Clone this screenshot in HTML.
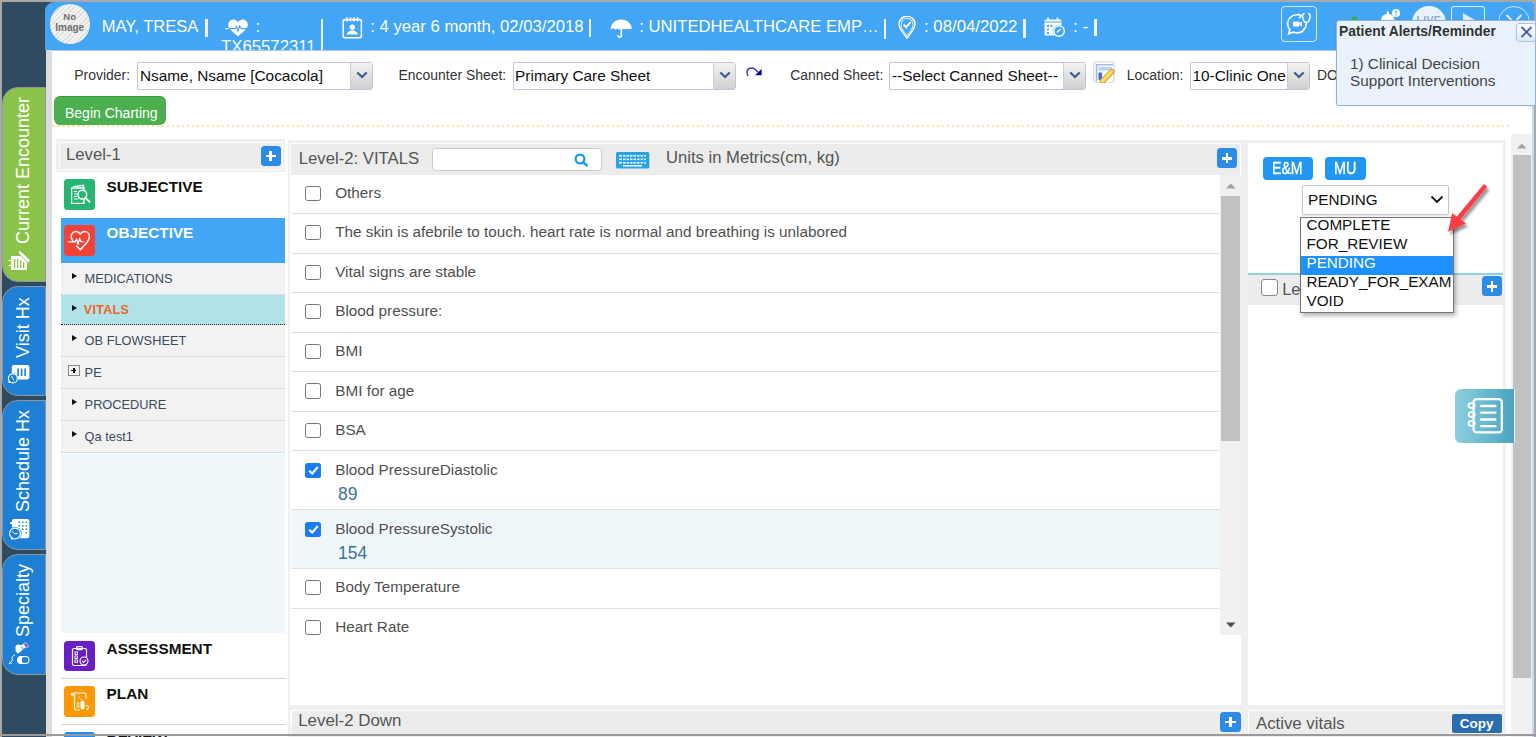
<!DOCTYPE html>
<html><head><meta charset="utf-8">
<style>
*{box-sizing:border-box;margin:0;padding:0}
html,body{width:1536px;height:737px;overflow:hidden;background:#fff;font-family:"Liberation Sans",sans-serif;position:relative}
.a{position:absolute}
.t{position:absolute;white-space:nowrap;line-height:1}
/* frame */
#ftop{left:0;top:0;width:1536px;height:2px;background:#a8a8a8}
#fleft{left:0;top:0;width:2px;height:737px;background:#a8a8a8}
#fright{left:1534px;top:0;width:2px;height:737px;background:#a8a8a8}
#fbot{left:0;top:734.4px;width:1536px;height:1.5px;background:#9a9a9a}
#nav{left:2px;top:2px;width:44px;height:735px;background:#304a60}
#strip{left:46px;top:50px;width:6px;height:687px;background:#dcdcdc}
.tab{position:absolute;left:2px;width:44px;border-radius:16px 0 0 16px;color:#fff;border:1px solid #8d98a3}
.tab .lbl{position:absolute;font-size:18px;line-height:1;white-space:nowrap;transform-origin:0 0;transform:rotate(-90deg)}
#header{left:45px;top:2px;width:1489px;height:48px;background:#42a5f5;border-radius:9px 2px 0 0}
.ht{position:absolute;color:#fff;font-size:17.3px;line-height:1;white-space:nowrap}
.lab{position:absolute;font-size:13.95px;color:#333;line-height:1;white-space:nowrap}
.sel{position:absolute;height:28px;border:1.5px solid #c3c7d8;background:#fff;border-radius:0 3px 3px 0}
.sel .v{position:absolute;left:1.5px;top:4.6px;font-size:15.4px;color:#111;line-height:1;white-space:nowrap}
.sel .btn{position:absolute;right:0;top:0;width:22px;height:100%;background:linear-gradient(#f2f2f2,#d0d0d0);border-left:1px solid #c9ccd9}
.sel .btn svg{position:absolute;left:5px;top:8px}

.l1h{position:absolute;left:56px;top:139px;width:229px;height:33px;background:#efefef}
.l1h .in{position:absolute;left:2.5px;top:2.8px;right:2.5px;bottom:2.5px;border:1px solid #fff;background:#ececec}
.plus{position:absolute;width:20.4px;height:20.4px;background:#2b8be6;border-radius:3.5px}
.plus:before{content:"";position:absolute;left:5px;top:9px;width:10.4px;height:2.5px;background:#fff}
.plus:after{content:"";position:absolute;left:8.95px;top:5px;width:2.5px;height:10.4px;background:#fff}
.ico{position:absolute;left:64.2px;width:30.8px;height:30.6px;border-radius:3.5px}
.l1t{position:absolute;left:106.6px;font-size:15.3px;font-weight:bold;color:#111;white-space:nowrap;line-height:1}
.sub{position:absolute;left:61px;width:224px;background:#f2f2f2;border-bottom:1px dotted #b9cde8}
.sub .tri{position:absolute;left:72px;width:0;height:0;border-left:5px solid #111;border-top:3.8px solid transparent;border-bottom:3.8px solid transparent}
.sub .st{position:absolute;left:23.6px;font-size:12.8px;color:#3b4a5c;white-space:nowrap;line-height:1}

.row{position:absolute;left:291px;width:929px;border-bottom:1.3px solid #e2e2e2;background:#fff}
.cb{position:absolute;left:14.4px;width:15.4px;height:15.3px;border:1.6px solid #767676;border-radius:2.5px;background:#fff}
.cbc{position:absolute;left:14.4px;width:15.4px;height:15.3px;border-radius:2.5px;background:#1a7cf5}
.rt{position:absolute;left:44.2px;font-size:15.3px;color:#505050;white-space:nowrap;line-height:1}
.rv{position:absolute;left:47px;font-size:17.5px;color:#3d7394;white-space:nowrap;line-height:1}
</style></head><body>
<div class="a" id="nav"></div>
<div class="a" style="left:2px;top:2px;width:60px;height:20px;background:#304a60"></div>
<div class="a" id="strip"></div>
<div class="a" id="ftop"></div>
<div class="a" id="fleft"></div>
<div class="a" id="fright"></div>

<!-- tabs -->
<div class="tab" style="top:87px;height:195px;background:#8bc34a"><div class="lbl" style="left:10.9px;top:156px">Current Encounter</div></div>
<div class="tab" style="top:286px;height:110px;background:#1e80d4"><div class="lbl" style="left:10.9px;top:71.0px">Visit Hx</div></div>
<div class="tab" style="top:400px;height:150px;background:#1e80d4"><div class="lbl" style="left:10.9px;top:111.0px">Schedule Hx</div></div>
<div class="tab" style="top:554px;height:121px;background:#1e80d4"><div class="lbl" style="left:10.9px;top:81.5px">Specialty</div></div>


<svg class="a" style="left:0;top:0" width="46" height="737" viewBox="0 0 46 737">
<!-- current encounter -->
<path d="M11 256 H20.5 L27 262.5 V270 H11z" fill="#fff"/>
<g fill="#8bc34a"><rect x="14" y="259" width="1.3" height="9"/><rect x="17" y="259" width="1.3" height="9"/><rect x="20" y="260" width="1.3" height="8"/><rect x="23" y="262" width="1.3" height="6"/></g>
<path d="M8.5 260.5 H12 M8.5 265.5 H12" stroke="#fff" stroke-width="1.1"/>
<path d="M22 254.6 L28.2 260.8" stroke="#fff" stroke-width="3" stroke-linecap="round"/>
<path d="M19.8 252.4 L20.6 253.2" stroke="#fff" stroke-width="2.2" stroke-linecap="round"/>
<!-- visit hx -->
<rect x="11.8" y="365" width="17.6" height="14.5" rx="2.2" fill="#fff"/>
<g fill="#1e80d4"><rect x="17.3" y="368.5" width="1.6" height="7.5"/><rect x="20.8" y="368.5" width="1.6" height="7.5"/><rect x="24.3" y="368.5" width="1.6" height="7.5"/></g>
<circle cx="12.9" cy="378.4" r="5.3" fill="#1e80d4"/>
<circle cx="12.9" cy="378.4" r="4.5" fill="none" stroke="#fff" stroke-width="1.2"/>
<path d="M11.6 376 L12.9 378.4 L13.6 380.4" fill="none" stroke="#fff" stroke-width="0.9"/>
<rect x="8.5" y="381" width="2" height="2" fill="#fff"/>
<!-- schedule hx -->
<rect x="12" y="519" width="17.4" height="19.3" rx="2" fill="#fff"/>
<rect x="10" y="522" width="4" height="2" rx="1" fill="#fff"/>
<g fill="#1e80d4"><circle cx="19.3" cy="522.3" r="0.85"/><circle cx="22.8" cy="522.3" r="0.85"/><circle cx="26.3" cy="522.3" r="0.85"/><circle cx="19.3" cy="525.8" r="0.85"/><circle cx="22.8" cy="525.8" r="0.85"/><circle cx="26.3" cy="525.8" r="0.85"/><circle cx="22.8" cy="529.2" r="0.85"/><circle cx="26.3" cy="529.2" r="0.85"/><circle cx="26.3" cy="532.6" r="0.85"/></g>
<circle cx="15" cy="533.5" r="6.6" fill="#1e80d4"/>
<circle cx="15" cy="533.5" r="5.4" fill="none" stroke="#fff" stroke-width="1.2"/>
<path d="M12.2 531.3 L14.6 533.8 L17.6 533.4" fill="none" stroke="#fff" stroke-width="1"/>
<rect x="11" y="537.5" width="2" height="2" fill="#fff"/>
<!-- specialty -->
<rect x="17" y="656" width="12.5" height="8" rx="4" fill="#fff"/>
<rect x="22" y="657.2" width="6.3" height="5.6" rx="1.5" fill="#1e80d4"/>
<circle cx="18.6" cy="647.8" r="3.2" fill="#fff"/>
<path d="M16.5 652 L24.5 645.5" stroke="#fff" stroke-width="4.2"/>
<path d="M21.2 646.8 L24 649.6" stroke="#1e80d4" stroke-width="1"/>
<ellipse cx="26.2" cy="645.1" rx="2.9" ry="1.4" transform="rotate(45 26.2 645.1)" fill="#5b4bd0" stroke="#fff" stroke-width="0.6"/>
<path d="M15 655 C12 656 11.5 658 12.5 660 L9 664 M10.5 662.5 L11.5 664" fill="none" stroke="#fff" stroke-width="1"/>
</svg>

<!-- header -->
<div class="a" id="header"></div>
<div class="a" style="left:52px;top:50px;width:1482px;height:1px;background:#a9c9ef"></div>

<!-- avatar -->
<div class="a" style="left:49.7px;top:3.6px;width:40px;height:40px;border-radius:50%;background:repeating-linear-gradient(135deg,#f3f3f3 0 2.3px,#dedede 2.3px 3.3px);overflow:hidden">
<div class="t" style="left:0;width:40px;text-align:center;top:8.6px;font-size:9.5px;font-weight:bold;color:#6f6f6f">No</div>
<div class="t" style="left:0;width:40px;text-align:center;top:19.6px;font-size:10px;font-weight:bold;color:#6f6f6f">Image</div>
</div>
<div class="ht" style="left:101.8px;top:18.8px;font-size:16.55px">MAY, TRESA</div>
<div class="a" style="left:205.3px;top:19px;width:2.3px;height:17.5px;background:#f6f0ea"></div>
<svg class="a" style="left:225px;top:18.6px" width="23" height="18" viewBox="0 0 23 18"><path d="M13 17.4 C9 14 3.2 10 3.2 5.6 C3.2 2.6 5.5 0.4 8.2 0.4 C10.2 0.4 12 1.6 13 3.3 C14 1.6 15.8 0.4 17.8 0.4 C20.5 0.4 22.8 2.6 22.8 5.6 C22.8 10 17 14 13 17.4 Z" fill="#fff"/><path d="M3 9.6 H10.2 L11.6 7.2 L13 12.4 L14.6 6.6 L15.9 9.6 H23" fill="none" stroke="#42a5f5" stroke-width="1.1" stroke-linejoin="round"/><path d="M0.3 9.6 H3.6" stroke="#fff" stroke-width="1.2"/></svg>
<div class="ht" style="left:255.5px;top:18.3px">:</div>
<div class="ht" style="left:221px;top:38.9px;font-size:16.75px;height:11.3px;overflow:hidden;line-height:1">TX65572311</div>
<div class="a" style="left:320.9px;top:19px;width:2.3px;height:31px;background:#f6f0ea"></div>
<svg class="a" style="left:342px;top:15.5px" width="21" height="23" viewBox="0 0 21 23"><rect x="1.2" y="3.6" width="18.2" height="18.2" rx="2" fill="none" stroke="#fff" stroke-width="1.6"/><path d="M5 1.2v4.2M8.5 1.2v4.2M12 1.2v4.2M15.5 1.2v4.2" stroke="#fff" stroke-width="1.4" fill="none"/><circle cx="10.3" cy="11.3" r="2.7" fill="#fff"/><path d="M4.6 18.4c0.6-2.8 3-4 5.7-4s5.1 1.2 5.7 4z" fill="#fff"/></svg>
<div class="ht" style="left:370.2px;top:18.8px;font-size:16.7px">: 4 year 6 month, 02/03/2018</div>
<div class="a" style="left:588.8px;top:19px;width:2.3px;height:17.5px;background:#f6f0ea"></div>
<svg class="a" style="left:610px;top:18.5px" width="23" height="20" viewBox="0 0 23 20"><path d="M0.6 10.5 C0.8 4.5 5.5 0.5 11.3 0.5 C17.1 0.5 21.8 4.5 22 10.5 C21 9.3 19.8 9.3 18.9 10.6 C18 9.3 16.5 9.3 15.6 10.6 C14.6 9.3 13 9.3 12 10.6 L12 10.8 C11.2 9.6 9.6 9.6 8.6 10.8 C7.6 9.4 6.2 9.4 5.2 10.7 C4.2 9.3 2.2 9.1 0.6 10.5Z" fill="#fff"/><path d="M11.3 10v6.8c0 1.9-3.2 1.9-3.2 0" fill="none" stroke="#fff" stroke-width="1.7" stroke-linecap="round"/></svg>
<div class="ht" style="left:639.3px;top:18.7px;font-size:16.66px">: UNITEDHEALTHCARE EMP…</div>
<div class="a" style="left:884.2px;top:19px;width:2.3px;height:19.5px;background:#f6f0ea"></div>
<svg class="a" style="left:897.5px;top:16px" width="18" height="23" viewBox="0 0 18 23"><path d="M9 22 C5 17 1 12.5 1 8.3 A8 8 0 0 1 17 8.3 C17 12.5 13 17 9 22Z" fill="none" stroke="#fff" stroke-width="1.5"/><path d="M9 19.5 C6 15.8 3 12 3 8.4 A6 6 0 0 1 15 8.4 C15 12 12 15.8 9 19.5Z" fill="none" stroke="#fff" stroke-width="0.9"/><path d="M5.6 8.6 L8.2 11.2 L12.6 6.2" fill="none" stroke="#fff" stroke-width="2"/></svg>
<div class="ht" style="left:924px;font-size:16.8px;top:18.6px">: 08/04/2022</div>
<div class="a" style="left:1023.3px;top:19px;width:2.3px;height:19px;background:#f6f0ea"></div>
<svg class="a" style="left:1043.5px;top:16.5px" width="22" height="21" viewBox="0 0 22 21"><rect x="0.5" y="2.5" width="17" height="16" rx="1.5" fill="#fff"/><path d="M4 0.5v3.5M13.5 0.5v3.5" stroke="#fff" stroke-width="1.6"/><rect x="0.5" y="4.5" width="17" height="1" fill="#42a5f5"/><g fill="#42a5f5"><rect x="3" y="8" width="2" height="2"/><rect x="3" y="11.5" width="2" height="2"/><rect x="3" y="15" width="2" height="2"/><rect x="6.5" y="8" width="2" height="2"/></g><circle cx="15" cy="14" r="6.3" fill="#42a5f5"/><circle cx="15" cy="14" r="5.3" fill="none" stroke="#fff" stroke-width="1.4"/><path d="M13 15.5 L15 13.5 L16.8 11.8" stroke="#fff" stroke-width="1.1" fill="none"/></svg>
<div class="ht" style="left:1073px;top:18.3px">: -</div>
<div class="a" style="left:1094.4px;top:19px;width:2.3px;height:17px;background:#f6f0ea"></div>
<!-- right icons -->
<div class="a" style="left:1281.3px;top:6px;width:35.7px;height:35.6px;border:1.4px solid rgba(255,255,255,0.75);border-radius:4px"></div>
<svg class="a" style="left:1285px;top:10px" width="28" height="28" viewBox="0 0 28 28"><path d="M16 5.5 C14.8 5 13.4 4.8 12 4.8 C6.5 4.8 2.6 8.9 2.6 13.8 C2.6 16 3.4 18 4.8 19.6 L3.6 23.8 L8.2 22 C9.4 22.6 10.7 22.9 12 22.9 C15.6 22.9 18.6 20.8 20 17.8" fill="none" stroke="#fff" stroke-width="1.6" stroke-linecap="round"/><path d="M13 4 L16.5 5.7 L14 8.3" fill="none" stroke="#fff" stroke-width="1.5"/><rect x="8" y="11.5" width="6.5" height="5" rx="1" fill="#fff"/><path d="M14.5 13 L17 11.6 V16.4 L14.5 15z" fill="#fff"/><path d="M19 3.6 C17.6 4 17.4 6 17.8 8 C18.3 10.5 19.5 12.5 21.3 12.5 C23.1 12.5 24.4 10.5 24.9 8 C25.3 6 25.1 4 23.7 3.6 M21.3 12.5 C21.3 16 20.5 18.5 18.5 19.5" fill="none" stroke="#fff" stroke-width="1.5" stroke-linecap="round"/></svg>
<div class="a" style="left:1351.5px;top:15.5px;width:5.5px;height:5.5px;border-radius:50%;background:#3cb043"></div>
<svg class="a" style="left:1378px;top:6px" width="26" height="16" viewBox="0 0 26 16"><path d="M3 16 C3 11 5 8.5 8.5 8 L9.2 5.3 C9.4 4.6 10.2 4.6 10.4 5.3 L11.1 8 C14.6 8.5 16.6 11 16.6 16Z" fill="#fff"/><circle cx="18" cy="7" r="4" fill="#fff"/><rect x="17.4" y="4.6" width="1.2" height="3.2" fill="#42a5f5"/><rect x="17.4" y="8.6" width="1.2" height="1.1" fill="#42a5f5"/></svg>
<div class="a" style="left:1412px;top:6px;width:34px;height:34px;border-radius:50%;background:#eaf3fd;overflow:hidden"><div class="t" style="left:4.5px;top:9px;font-size:10.5px;font-weight:bold;color:#90a8d0;letter-spacing:0.3px">LIVE</div></div>
<div class="a" style="left:1451px;top:6px;width:34px;height:34px;border:1.6px solid rgba(255,255,255,0.85);border-radius:3px"></div>
<svg class="a" style="left:1462px;top:12.5px" width="14" height="12" viewBox="0 0 14 12"><path d="M1 0 L13 7 L1 12z" fill="rgba(255,255,255,0.8)"/></svg>
<div class="a" style="left:1498px;top:6px;width:32px;height:32px;border:1.6px solid rgba(255,255,255,0.7);border-radius:50%"></div>
<svg class="a" style="left:1505px;top:14px" width="18" height="8" viewBox="0 0 18 8"><path d="M2 1.5 L6 5.5 M16 1.5 L12 5.5" stroke="rgba(255,255,255,0.8)" stroke-width="2" stroke-linecap="round"/></svg>

<!-- toolbar -->
<div class="lab" style="left:74.3px;top:69.2px">Provider:</div>
<div class="sel" style="left:137.4px;top:62px;width:235.8px"><div class="v">Nsame, Nsame [Cocacola]</div><div class="btn"><svg width="12" height="8" viewBox="0 0 12 8"><path d="M1.3 1.5 L6 6 L10.7 1.5" fill="none" stroke="#3d5b9c" stroke-width="2.3"/></svg></div></div>
<div class="lab" style="left:398.5px;top:69px">Encounter Sheet:</div>
<div class="sel" style="left:512.6px;top:62px;width:223px"><div class="v">Primary Care Sheet</div><div class="btn"><svg width="12" height="8" viewBox="0 0 12 8"><path d="M1.3 1.5 L6 6 L10.7 1.5" fill="none" stroke="#3d5b9c" stroke-width="2.3"/></svg></div></div>
<svg class="a" style="left:744.5px;top:65.5px" width="18" height="12" viewBox="0 0 18 12"><path d="M3.2 10 C1.2 8 1.6 2.6 5.4 2.2 H8.6 L13 6" fill="none" stroke="#3d3da6" stroke-width="1.5"/><path d="M10 9.3 H16.6 V3z" fill="#00008f"/></svg>
<div class="lab" style="left:790.3px;top:69px">Canned Sheet:</div>
<div class="sel" style="left:889.4px;top:62px;width:197px"><div class="v">--Select Canned Sheet--</div><div class="btn"><svg width="12" height="8" viewBox="0 0 12 8"><path d="M1.3 1.5 L6 6 L10.7 1.5" fill="none" stroke="#3d5b9c" stroke-width="2.3"/></svg></div></div>
<svg class="a" style="left:1092.5px;top:61px" width="22" height="22" viewBox="0 0 22 22"><rect x="0.8" y="0.8" width="20.2" height="20.9" rx="3" fill="#fbfcfe" stroke="#d6d6d6" stroke-width="1.1"/><path d="M3.6 20.5 V3.8 H20" fill="none" stroke="#9dbde8" stroke-width="1.6"/><rect x="5.5" y="6" width="13.5" height="3.6" fill="#b5d4f4"/><rect x="5.5" y="11.5" width="3.6" height="7.6" rx="0.8" fill="#3f70c4"/><path d="M9.5 20.2 L18.8 10.6" stroke="#e39a3a" stroke-width="5.6" stroke-linecap="round"/><path d="M9.6 20 L18.6 10.8" stroke="#f6dd62" stroke-width="3.4" stroke-linecap="round"/></svg>
<div class="lab" style="left:1126.8px;top:69px">Location:</div>
<div class="sel" style="left:1190px;top:62px;width:120px"><div class="v">10-Clinic One</div><div class="btn"><svg width="12" height="8" viewBox="0 0 12 8"><path d="M1.3 1.5 L6 6 L10.7 1.5" fill="none" stroke="#3d5b9c" stroke-width="2.3"/></svg></div></div>
<div class="lab" style="left:1317px;top:69px">DOS:</div>
<!-- begin charting -->
<div class="a" style="left:54px;top:96px;width:112px;height:29px;background:#4caf50;border-radius:6px;border-top:1px solid #3b9a40"></div>
<div class="t" style="left:65px;top:106px;font-size:14px;color:#fff">Begin Charting</div>
<div class="a" style="left:52px;top:125px;width:1459px;height:2px;background:repeating-linear-gradient(90deg,#fde3a6 0 2.5px,transparent 2.5px 5px)"></div>


<!-- level 1 -->
<div class="l1h"><div class="in"></div></div>
<div class="t" style="left:66px;top:146.5px;font-size:16.7px;color:#555">Level-1</div>
<div class="plus" style="left:260.5px;top:145.9px"></div>
<div class="ico" style="top:179.1px;background:#26b573"><svg width="31" height="31" viewBox="0 0 31 31"><path d="M9.3 7.6 L19.5 6.3 V9" fill="none" stroke="#fff" stroke-width="1.3"/><path d="M20 19.8 V24.3 H7.6 V9 H20 V11.3" fill="none" stroke="#fff" stroke-width="1.3"/><path d="M10 12.5h3M10 15h3M10 17.5h3M10 20h4.5" stroke="#fff" stroke-width="1"/><circle cx="18.3" cy="15.6" r="4.4" fill="none" stroke="#fff" stroke-width="1.5"/><path d="M21.5 18.8 L25.5 22.8" stroke="#fff" stroke-width="1.8" stroke-linecap="round"/></svg></div>
<div class="l1t" style="top:179.3px">SUBJECTIVE</div>
<div class="a" style="left:61px;top:217.8px;width:224px;height:45.2px;background:#42a5f5"></div>
<div class="ico" style="top:225.2px;background:#f44336"><svg width="31" height="31" viewBox="0 0 31 31"><path d="M9.3 16.8 C7.9 15.2 7.2 13.5 7.2 11.6 C7.2 8.6 9.4 6.6 12 6.6 C13.9 6.6 15.4 7.7 16.3 9.2 C17.2 7.7 18.7 6.6 20.6 6.6 C23.2 6.6 25.4 8.6 25.4 11.6 C25.4 16.5 20.6 20.5 16.3 24.6 L12.4 21" fill="none" stroke="#fff" stroke-width="1.5" stroke-linejoin="round" stroke-linecap="round"/><path d="M3.8 16.8 H11.2 L12.6 14 L14 19.5 L15.6 13.5 L16.8 16.6 H19.5" fill="none" stroke="#fff" stroke-width="1.3" stroke-linejoin="round"/></svg></div>
<div class="l1t" style="top:225.3px;color:#fff">OBJECTIVE</div>
<div class="sub" style="top:263px;height:32px"><div class="tri" style="left:11px;top:10px"></div><div class="st" style="top:10px">MEDICATIONS</div></div>
<div class="sub" style="top:295px;height:30px;background:#b1e1e9;border-bottom:1px dotted #222"><div class="tri" style="left:11px;top:10px"></div><div class="st" style="top:9.3px;left:22.8px;color:#f2651f;letter-spacing:0.3px;font-weight:bold;font-size:12.5px">VITALS</div></div>
<div class="sub" style="top:325px;height:32.2px"><div class="tri" style="left:11px;top:10px"></div><div class="st" style="top:10px">OB FLOWSHEET</div></div>
<div class="sub" style="top:357.2px;height:32px"><div class="a" style="left:7.3px;top:7.8px;width:12px;height:11.5px;border:1.3px solid #8a8a8a;background:#f4f4f4"><div class="a" style="left:2.2px;top:3.9px;width:5px;height:1.5px;background:#111"></div><div class="a" style="left:3.95px;top:2.15px;width:1.5px;height:5px;background:#111"></div></div><div class="st" style="top:10.3px">PE</div></div>
<div class="sub" style="top:389.2px;height:32px"><div class="tri" style="left:11px;top:10px"></div><div class="st" style="top:10px">PROCEDURE</div></div>
<div class="sub" style="top:421.2px;height:32.3px"><div class="tri" style="left:11px;top:10px"></div><div class="st" style="top:10px">Qa test1</div></div>
<div class="a" style="left:61px;top:453.5px;width:224px;height:179.5px;background:#eff7fa"></div>
<div class="ico" style="top:640.5px;background:#6a1fc4"><svg width="31" height="31" viewBox="0 0 31 31"><rect x="8.5" y="7.5" width="14" height="17" rx="1.5" fill="none" stroke="#fff" stroke-width="1.2"/><rect x="12.5" y="5.6" width="6" height="3" rx="1" fill="none" stroke="#fff" stroke-width="1.1"/><rect x="11" y="11" width="2.5" height="2.5" fill="none" stroke="#fff" stroke-width="0.9"/><rect x="11" y="15" width="2.5" height="2.5" fill="none" stroke="#fff" stroke-width="0.9"/><rect x="11" y="19" width="2.5" height="2.5" fill="none" stroke="#fff" stroke-width="0.9"/><circle cx="20" cy="20" r="4" fill="#6a1fc4" stroke="#fff" stroke-width="1.1"/><path d="M18.2 20 L19.6 21.4 L22 18.8" fill="none" stroke="#fff" stroke-width="1.1"/></svg></div>
<div class="l1t" style="top:640.5px">ASSESSMENT</div>
<div class="a" style="left:61px;top:678px;width:225px;height:1.3px;background:#d6d6d6"></div>
<div class="ico" style="top:686px;background:#ff9800"><svg width="31" height="31" viewBox="0 0 31 31"><path d="M9.5 7 H20.5 C21.5 7 22 7.6 22 8.6 V13" fill="none" stroke="#fff" stroke-width="1.2"/><path d="M10.5 8 V22.5 C10.5 23.5 11 24 12 24 H16" fill="none" stroke="#fff" stroke-width="1.2"/><circle cx="8.3" cy="8.3" r="1.5" fill="#fff"/><path d="M14.5 10.5l1.5 1.5M16.5 12.5l1.5 1.5" stroke="#fff" stroke-width="1"/><path d="M12.5 17h3M12.5 19h3M12.5 21h3" stroke="#fff" stroke-width="0.9"/><rect x="16.5" y="14.5" width="4" height="9" rx="2" fill="#fff"/><path d="M22 19.5 a2.5 2 0 1 1 0 4" fill="none" stroke="#fff" stroke-width="1.1"/></svg></div>
<div class="l1t" style="top:686.3px">PLAN</div>
<div class="a" style="left:61px;top:724px;width:225px;height:1.3px;background:#d6d6d6"></div>
<div class="ico" style="top:732px;background:#1e90ff"></div>
<div class="l1t" style="top:733.2px">REVIEW</div>

<!-- level 2 -->
<div class="a" style="left:288px;top:140px;width:959px;height:600px;background:#efefef"></div>
<div class="a" style="left:290.3px;top:142.5px;width:955px;height:580px;background:#fff"></div>
<div class="a" style="left:291px;top:143.6px;width:949px;height:31.4px;background:#ececec"></div>
<div class="t" style="left:298.8px;top:151.2px;font-size:16.7px;color:#555">Level-2: VITALS</div>
<div class="a" style="left:432.2px;top:147.6px;width:169.4px;height:23.2px;background:#fff;border:1.2px solid #cbcbcb;border-radius:3.5px"></div>
<svg class="a" style="left:574px;top:153px" width="15" height="14" viewBox="0 0 15 14"><circle cx="6" cy="6" r="4.4" fill="none" stroke="#1b9ae6" stroke-width="2.3"/><path d="M9.2 9.2 L12.6 12.4" stroke="#1b9ae6" stroke-width="2.6" stroke-linecap="round"/></svg>
<svg class="a" style="left:615.5px;top:151.5px" width="34" height="17" viewBox="0 0 34 17"><rect x="0" y="0" width="33.3" height="16.5" rx="1.5" fill="#2aa3e2"/><g fill="#e8f6fd"><rect x="3" y="3" width="27" height="1.6"/><rect x="3" y="6.5" width="27" height="1.6"/><rect x="3" y="10" width="27" height="1.6"/><rect x="7" y="13" width="19" height="1.6"/></g><g fill="#2aa3e2"><rect x="6" y="2.5" width="1" height="10"/><rect x="9.5" y="2.5" width="1" height="10"/><rect x="13" y="2.5" width="1" height="10"/><rect x="16.5" y="2.5" width="1" height="10"/><rect x="20" y="2.5" width="1" height="10"/><rect x="23.5" y="2.5" width="1" height="10"/><rect x="27" y="2.5" width="1" height="10"/></g></svg>
<div class="t" style="left:666px;top:150.3px;font-size:16.65px;color:#555">Units in Metrics(cm, kg)</div>
<div class="plus" style="left:1217px;top:148px"></div>
<div class="row" style="top:175px;height:39.05px"><div class="cb" style="top:11px"></div><div class="rt" style="top:10.3px">Others</div></div>
<div class="row" style="top:214.05px;height:39.8px"><div class="cb" style="top:11px"></div><div class="rt" style="top:10.3px">The skin is afebrile to touch. heart rate is normal and breathing is unlabored</div></div>
<div class="row" style="top:253.85px;height:39.0px"><div class="cb" style="top:11px"></div><div class="rt" style="top:10.3px">Vital signs are stable</div></div>
<div class="row" style="top:292.85px;height:39.9px"><div class="cb" style="top:11px"></div><div class="rt" style="top:10.3px">Blood pressure:</div></div>
<div class="row" style="top:332.75px;height:39.6px"><div class="cb" style="top:11px"></div><div class="rt" style="top:10.3px">BMI</div></div>
<div class="row" style="top:372.35px;height:39.6px"><div class="cb" style="top:11px"></div><div class="rt" style="top:10.3px">BMI for age</div></div>
<div class="row" style="top:411.95px;height:39.4px"><div class="cb" style="top:11px"></div><div class="rt" style="top:10.3px">BSA</div></div>
<div class="row" style="top:451.35px;height:58.9px"><div class="cbc" style="top:11.2px"><svg class="a" style="left:2.5px;top:2.5px" width="11" height="11" viewBox="0 0 11 11"><path d="M1.2 5.8 L4.2 8.6 L9.8 2" fill="none" stroke="#fff" stroke-width="2.1"/></svg></div><div class="rt" style="top:10.6px">Blood PressureDiastolic</div><div class="rv" style="top:34.6px">89</div></div>
<div class="row" style="top:510.25px;height:58.8px;background:#f0f7fa"><div class="cbc" style="top:11.3px"><svg class="a" style="left:2.5px;top:2.5px" width="11" height="11" viewBox="0 0 11 11"><path d="M1.2 5.8 L4.2 8.6 L9.8 2" fill="none" stroke="#fff" stroke-width="2.1"/></svg></div><div class="rt" style="top:10.6px">Blood PressureSystolic</div><div class="rv" style="top:34.6px">154</div></div>
<div class="row" style="top:569.05px;height:39.6px"><div class="cb" style="top:11px"></div><div class="rt" style="top:10.3px">Body Temperature</div></div>
<div class="row" style="top:608.65px;height:95.95px;border-bottom:none"><div class="cb" style="top:11px"></div><div class="rt" style="top:10.3px">Heart Rate</div></div>

<div class="a" style="left:1220px;top:175px;width:20.5px;height:460px;background:#f1f1f1"></div>
<svg class="a" style="left:1225.5px;top:183px" width="10" height="6" viewBox="0 0 10 6"><path d="M0 5.6 L4.8 0.4 L9.6 5.6z" fill="#a3a3a3"/></svg>
<div class="a" style="left:1221px;top:196px;width:18.5px;height:244.5px;background:#c1c1c1"></div>
<svg class="a" style="left:1225.5px;top:621.5px" width="10" height="6" viewBox="0 0 10 6"><path d="M0 0.4 L4.8 5.6 L9.6 0.4z" fill="#505050"/></svg>
<div class="a" style="left:288px;top:704.6px;width:959px;height:6.4px;background:#efefef"></div>
<div class="a" style="left:291px;top:710.3px;width:949px;height:26px;background:#ececec;border-top:1px solid #fff;border-left:1px solid #fff"></div>
<div class="t" style="left:298.2px;top:712.6px;font-size:16.9px;color:#555">Level-2 Down</div>
<div class="plus" style="left:1220.4px;top:711.5px"></div>

<!-- right panel -->
<div class="a" style="left:1241px;top:140px;width:265px;height:600px;background:#efefef"></div>
<div class="a" style="left:1247.7px;top:143px;width:255.8px;height:561.7px;background:#fff"></div>
<div class="a" style="left:1262.9px;top:157px;width:49.8px;height:23.3px;background:#2196f3;border-radius:4px"></div>
<div class="t" style="left:1271.8px;top:160.6px;font-size:16px;color:#fff;transform:scaleX(0.88);transform-origin:0 0;-webkit-text-stroke:0.35px #fff">E&amp;M</div>
<div class="a" style="left:1325px;top:157px;width:41px;height:23.3px;background:#2196f3;border-radius:4px"></div>
<div class="t" style="left:1333.6px;top:160.6px;font-size:16px;color:#fff;transform:scaleX(0.9);transform-origin:0 0;-webkit-text-stroke:0.35px #fff">MU</div>
<div class="a" style="left:1302.4px;top:185.3px;width:146.3px;height:29.7px;background:#fff;border:1px solid #c8c8c8;border-radius:2px;box-shadow:0 1px 2px rgba(0,0,0,0.12)"></div>
<div class="t" style="left:1308px;top:192.2px;font-size:15.3px;color:#111">PENDING</div>
<svg class="a" style="left:1430px;top:195px" width="14" height="9" viewBox="0 0 14 9"><path d="M1.5 1.5 L7 7 L12.5 1.5" fill="none" stroke="#111" stroke-width="1.8"/></svg>
<div class="a" style="left:1248px;top:273.4px;width:255px;height:1.6px;background:#8fd3df"></div>
<div class="a" style="left:1248px;top:275px;width:255px;height:30.2px;background:#ececec"></div>
<div class="a" style="left:1261.2px;top:279.1px;width:16.4px;height:16.7px;border:1.6px solid #888;border-radius:3px;background:#fff"></div>
<div class="t" style="left:1282.2px;top:281px;font-size:16.5px;color:#555">Level-3</div>
<div class="plus" style="left:1482px;top:276.3px;width:20px;height:20px"></div>
<div class="a" style="left:1241px;top:704.7px;width:265px;height:6.3px;background:#efefef"></div>
<div class="a" style="left:1248px;top:710.3px;width:255.5px;height:26px;background:#ececec;border-top:1px solid #fff;border-left:1px solid #fff"></div>
<div class="t" style="left:1256px;top:715.7px;font-size:16.8px;color:#555">Active vitals</div>
<div class="a" style="left:1452px;top:714.2px;width:50px;height:18.4px;background:#2a6ead;border-radius:2px"></div>
<div class="t" style="left:1459.8px;top:716.8px;font-size:13.5px;font-weight:bold;color:#fff">Copy</div>
<!-- outer scrollbar -->
<div class="a" style="left:1511px;top:134px;width:21px;height:603px;background:#f1f1f1"></div>
<svg class="a" style="left:1517px;top:142.5px" width="10" height="6" viewBox="0 0 10 6"><path d="M0 5.6 L4.8 0.4 L9.6 5.6z" fill="#a3a3a3"/></svg>
<div class="a" style="left:1513px;top:155.3px;width:18px;height:522.4px;background:#c1c1c1"></div>
<div class="a" style="left:1532px;top:50px;width:2px;height:687px;background:#c9d9ee"></div>
<!-- notebook -->
<div class="a" style="left:1455.3px;top:389px;width:59.7px;height:54.3px;border-radius:6px 0 0 6px;background:linear-gradient(90deg,#8dcfdf,#4ba3c1);border-right:1px solid #e8f4f8"></div>
<svg class="a" style="left:1455px;top:389px" width="60" height="55" viewBox="0 0 60 55"><rect x="18.6" y="10.2" width="28.2" height="33.2" rx="3" fill="none" stroke="#fff" stroke-width="2.3"/><path d="M25.3 17h16.1M25.3 23.7h16.1M25.3 30.5h16.1M25.3 37.2h16.1" stroke="#fff" stroke-width="2.3"/><g fill="none" stroke="#fff" stroke-width="1.9"><rect x="13.6" y="14.3" width="6" height="4.6" rx="2.3"/><rect x="13.6" y="23.2" width="6" height="4.6" rx="2.3"/><rect x="13.6" y="32.1" width="6" height="4.6" rx="2.3"/></g></svg>

<!-- dropdown -->
<div class="a" style="left:1300.4px;top:216.5px;width:154px;height:96.5px;background:#fff;border:1px solid #767676;box-shadow:2px 3px 4px rgba(0,0,0,0.28)"></div>
<div class="a" style="left:1301.4px;top:256px;width:152px;height:18.6px;background:#1e90ff"></div>
<div class="t" style="left:1306.5px;top:216.2px;font-size:15.25px;color:#111;line-height:18.9px">COMPLETE<br>FOR_REVIEW<br><span style="color:#fff">PENDING</span><br>READY_FOR_EXAM<br>VOID</div>
<!-- red arrow -->
<svg class="a" style="left:1440px;top:180px;overflow:visible" width="60" height="60" viewBox="0 0 60 60">
<defs><filter id="sh" x="-50%" y="-50%" width="200%" height="200%"><feGaussianBlur in="SourceAlpha" stdDeviation="1.6"/><feOffset dx="2" dy="2.5"/><feComponentTransfer><feFuncA type="linear" slope="0.45"/></feComponentTransfer><feMerge><feMergeNode/><feMergeNode in="SourceGraphic"/></feMerge></filter></defs>
<g filter="url(#sh)"><path d="M44.4 6.9 L19 37.5" stroke="#fc3d47" stroke-width="4.6" stroke-linecap="round"/><path d="M8.1 51.7 L12.2 33 L26 43.6z" fill="#fc3d47"/></g></svg>
<!-- popup -->
<div class="a" style="left:1335.5px;top:19.5px;width:200px;height:86.5px;background:#e9f2fc;border:1px solid #90b2dc;border-radius:3px 0 0 3px;box-shadow:0 0 2px rgba(0,0,0,0.1)"></div>
<div class="t" style="left:1339px;top:24.5px;font-size:13.9px;font-weight:bold;color:#333">Patient Alerts/Reminder</div>
<div class="a" style="left:1516px;top:22.5px;width:20px;height:19.2px;border:1px solid #a9c2e3;border-radius:3px;background:linear-gradient(#fbfdff,#dde9f8)"></div>
<svg class="a" style="left:1519.5px;top:26px" width="13" height="12" viewBox="0 0 13 12"><path d="M1.5 1 L11.5 11 M11.5 1 L1.5 11" stroke="#4b5ba8" stroke-width="1.8"/></svg>
<div class="t" style="left:1350px;top:54.5px;font-size:15.3px;color:#444;line-height:17.75px">1) Clinical Decision<br>Support Interventions</div>
<div class="a" id="fbot"></div>
</body></html>
